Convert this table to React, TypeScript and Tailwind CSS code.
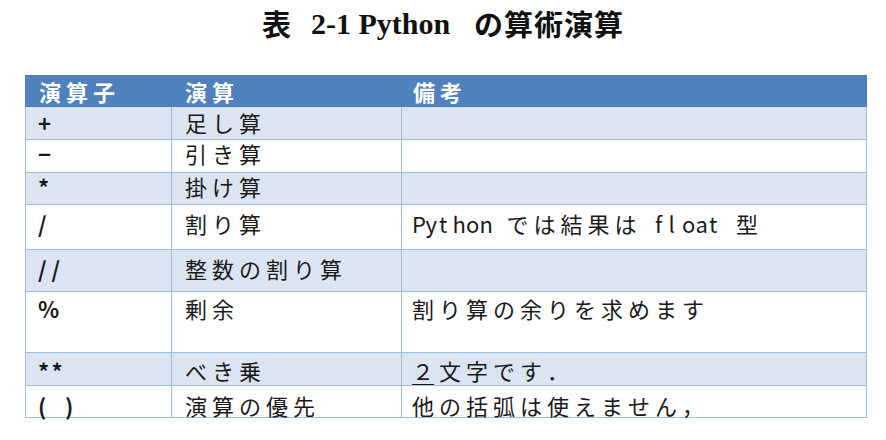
import React from "react";

const CJK = '"Noto Sans CJK JP", "Noto Sans", sans-serif';

function G({ text, u = -1 }: { text: string; u?: number }) {
  return (
    <span className="flex">
      {Array.from(text).map((ch, i) => {
        const half = ch.charCodeAt(0) < 0x2000;
        return (
          <span
            key={i}
            className={half ? "inline-block w-[13.5px] shrink-0 whitespace-pre" : "inline-block w-[27px] shrink-0 whitespace-pre"}
          >
            {i === u ? <span className="underline underline-offset-[4px] decoration-1">{ch}</span> : ch}
          </span>
        );
      })}
    </span>
  );
}

type Row = { op: string; name: string; note: string; h: string; pt: string; bg: string; u?: number };

const rows: Row[] = [
  { op: "+", name: "足し算", note: "", h: "h-[33px]", pt: "pt-[4px]", bg: "bg-[#dbe5f1]" },
  { op: "−", name: "引き算", note: "", h: "h-[33px]", pt: "pt-[2px]", bg: "bg-white" },
  { op: "*", name: "掛け算", note: "", h: "h-[32px]", pt: "pt-[2px]", bg: "bg-[#dbe5f1]" },
  { op: "/", name: "割り算", note: "Python では結果は float 型", h: "h-[45px]", pt: "pt-[7px]", bg: "bg-white" },
  { op: "//", name: "整数の割り算", note: "", h: "h-[42px]", pt: "pt-[7px]", bg: "bg-[#dbe5f1]" },
  { op: "%", name: "剰余", note: "割り算の余りを求めます", h: "h-[61px]", pt: "pt-[5px]", bg: "bg-white" },
  { op: "**", name: "べき乗", note: "２文字です．", h: "h-[33px]", pt: "pt-[6px]", bg: "bg-[#dbe5f1]", u: 0 },
  { op: "( )", name: "演算の優先", note: "他の括弧は使えません，", h: "h-[32px]", pt: "pt-[8px]", bg: "bg-white" },
];

export default function App() {
  return (
    <div className="w-[886px] h-[440px] bg-white overflow-hidden">
      <div className="h-[46px] flex items-center justify-center text-[#111] pt-[1px]">
        <span className="text-[29px] font-bold leading-none" style={{ fontFamily: CJK }}>表</span>
        <span
          className="ml-[20px] text-[30px] font-bold leading-none"
          style={{ fontFamily: '"Liberation Serif", serif' }}
        >
          2-1 Python
        </span>
        <span className="ml-[24px] text-[29px] font-bold leading-none tracking-[1px]" style={{ fontFamily: CJK }}>
          の算術演算
        </span>
      </div>
      <div
        className="mt-[29px] ml-[25px] w-[842px] border-l border-t border-[#9fbbdd] text-[22px] leading-[22px] text-[#1a1a1a]"
        style={{ fontFamily: CJK }}
      >
        <div className="grid grid-cols-[146px_230px_465px] h-[32px] bg-[#4f81bd] text-white font-bold border-b border-[#4a7ebb] -mt-px -ml-px border-t border-l">
          <div className="pl-[13px] pt-[4px]"><G text="演算子" /></div>
          <div className="pl-[13px] pt-[4px]"><G text="演算" /></div>
          <div className="pl-[11px] pt-[4px] border-r border-[#4a7ebb]"><G text="備考" /></div>
        </div>
        {rows.map((r, i) => (
          <div key={i} className={`grid grid-cols-[146px_230px_465px] ${r.h} ${r.bg}`}>
            <div className={`pl-[12px] ${r.pt} font-bold border-r border-b border-[#9fbbdd]`}>
              <G text={r.op} />
            </div>
            <div className={`pl-[13px] ${r.pt} border-r border-b border-[#9fbbdd]`}>
              <G text={r.name} />
            </div>
            <div className={`pl-[10px] ${r.pt} border-r border-b border-[#9fbbdd]`}>
              <G text={r.note} u={r.u ?? -1} />
            </div>
          </div>
        ))}
      </div>
    </div>
  );
}
